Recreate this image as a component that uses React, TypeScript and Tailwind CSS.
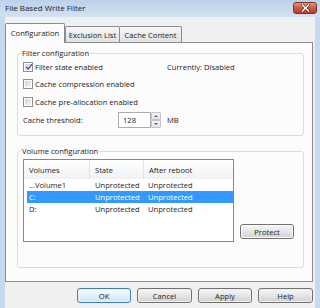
import React from "react";

function Check({ checked }: { checked?: boolean }) {
  return (
    <span className="relative w-[10px] h-[10px] border border-[#8e8f8f] bg-white p-[1px] flex shrink-0">
      <span className="flex-1 bg-gradient-to-br from-[#cdd1d6] to-[#f7f7f7]" />
      {checked && (
        <svg className="absolute left-[0px] top-[-1px]" width="10" height="10" viewBox="0 0 10 10">
          <path d="M2.2 4.8 L4.1 7.2 L7.9 2.2" fill="none" stroke="#3d55a0" strokeWidth="1.3" />
        </svg>
      )}
    </span>
  );
}

function Btn({ label, w, def }: { label: string; w: string; def?: boolean }) {
  return (
    <div
      className={
        "h-[15px] rounded-[3px] border p-[1px] flex " +
        w +
        (def ? " border-[#3c7fb1]" : " border-[#707070]")
      }
    >
      <div
        className={
          "flex-1 rounded-[2px] flex items-center justify-center " +
          (def
            ? "bg-gradient-to-b from-[#f4f9fd] via-[#e4f1fa] to-[#cde6f6]"
            : "bg-gradient-to-b from-[#f4f4f4] via-[#e6e6e6] to-[#d3d3d3]")
        }
      >
        {label}
      </div>
    </div>
  );
}

function Group({ title, children, className }: { title: string; children: React.ReactNode; className?: string }) {
  return (
    <div className={"relative border border-[#d5dfe5] rounded-[3px] " + (className ?? "")}>
      <span className="absolute left-[3px] -top-[7px] px-[1px] bg-[#fcfcfc] leading-[12px] text-[#1a1a1a]">
        {title}
      </span>
      {children}
    </div>
  );
}

const rows = [
  { v: "…Volume1", s: "Unprotected", a: "Unprotected", sel: false },
  { v: "C:", s: "Unprotected", a: "Unprotected", sel: true },
  { v: "D:", s: "Unprotected", a: "Unprotected", sel: false },
];

export default function App() {
  return (
    <div className="w-[320px] h-[308px] overflow-hidden flex flex-col bg-[#c6d9ee] text-[#1a1a1a] font-['Open_Sans','Liberation_Sans',sans-serif] text-[7.6px] leading-[12px]">
      {/* title bar */}
      <div className="h-[17px] shrink-0 flex items-start justify-between pl-[5px] pr-[3px] bg-gradient-to-b from-[#bcd1e9] to-[#d3e2f1]">
        <span className="mt-[2px] text-[8px] text-[#1a1a1a]">File Based Write Filter</span>
        <div className="mt-[2px] w-[24px] h-[12px] rounded-[3px] border border-[#7a3328] bg-gradient-to-b from-[#dd9484] via-[#cc5a45] to-[#b8402c] flex items-center justify-center">
          <svg width="9" height="8" viewBox="0 0 9 8">
            <path d="M1.5 1 L7.5 7 M7.5 1 L1.5 7" stroke="#5a1d14" strokeWidth="2.6" strokeLinecap="square" />
            <path d="M1.5 1 L7.5 7 M7.5 1 L1.5 7" stroke="#ffffff" strokeWidth="1.5" strokeLinecap="square" />
          </svg>
        </div>
      </div>

      {/* body */}
      <div className="flex-1 mx-[5px] bg-[#f0f0f0] pt-[6px] pr-[2px] flex flex-col">
        {/* tabs */}
        <div className="h-[20px] shrink-0 flex items-end -mb-[1px] relative z-10">
          <div className="w-[60px] h-[20px] border border-b-0 border-[#898c95] rounded-t-[2px] bg-[#fcfcfc] flex items-start pt-[3px] justify-center">
            Configuration
          </div>
          <div className="w-[55px] h-[16px] mb-[1px] border border-b-0 border-[#898c95] rounded-t-[2px] bg-gradient-to-b from-[#f6f6f6] to-[#e2e2e2] flex items-center justify-center">
            Exclusion List
          </div>
          <div className="w-[62px] h-[16px] mb-[1px] border border-l-0 border-b-0 border-[#898c95] rounded-tr-[2px] bg-gradient-to-b from-[#f6f6f6] to-[#e2e2e2] flex items-center justify-center">
            Cache Content
          </div>
        </div>

        {/* panel */}
        <div className="h-[240px] shrink-0 border border-[#898c95] bg-[#fcfcfc] pt-[10px] pl-[11px] pr-[8px]">
          <Group title="Filter configuration" className="pt-[8px] pb-[7px] pl-[5px]">
            <div className="h-[10px] flex items-center">
              <div className="w-[144px] flex items-center gap-[2px]">
                <Check checked />
                <span>Filter state enabled</span>
              </div>
              <span>Currently: Disabled</span>
            </div>
            <div className="h-[10px] mt-[7px] flex items-center gap-[2px]">
              <Check />
              <span>Cache compression enabled</span>
            </div>
            <div className="h-[10px] mt-[8px] flex items-center gap-[2px]">
              <Check />
              <span>Cache pre-allocation enabled</span>
            </div>
            <div className="h-[16px] mt-[5px] flex items-center">
              <span className="w-[95px]">Cache threshold:</span>
              <div className="w-[33px] h-[16px] border border-[#abadb3] bg-white flex items-center pl-[4px]">
                128
              </div>
              <div className="w-[10px] h-[16px] flex flex-col">
                <div className="h-[8px] border border-[#c3c5ca] rounded-[1px] bg-gradient-to-b from-[#f7f7f7] to-[#e4e4e4] flex items-center justify-center">
                  <svg width="4" height="2" viewBox="0 0 4 2">
                    <path d="M0 2 L2 0 L4 2 Z" fill="#4d6185" />
                  </svg>
                </div>
                <div className="h-[8px] border border-[#c3c5ca] rounded-[1px] bg-gradient-to-b from-[#f7f7f7] to-[#e4e4e4] flex items-center justify-center">
                  <svg width="4" height="2" viewBox="0 0 4 2">
                    <path d="M0 0 L2 2 L4 0 Z" fill="#4d6185" />
                  </svg>
                </div>
              </div>
              <span className="ml-[6px]">MB</span>
            </div>
          </Group>

          <Group title="Volume configuration" className="mt-[15px] pt-[7px] pb-[25px] pl-[5px]">
            <div className="flex items-end">
              <div className="w-[211px] h-[83px] border border-[#828790] bg-white flex flex-col">
                <div className="h-[19px] flex bg-gradient-to-b from-[#ffffff] to-[#f1f2f4]">
                  <div className="w-[66px] pl-[5px] flex items-center border-r border-[#e2e3e6]">Volumes</div>
                  <div className="w-[54px] pl-[5px] flex items-center border-r border-[#e2e3e6]">State</div>
                  <div className="flex-1 pl-[5px] flex items-center">After reboot</div>
                </div>
                {rows.map((r) => (
                  <div key={r.v} className="h-[12px] pl-[3px] flex">
                    <div className={"flex-1 flex items-center " + (r.sel ? "bg-[#3399ff] text-white" : "")}>
                      <div className="w-[63px] pl-[2px]">{r.v}</div>
                      <div className="w-[54px] pl-[5px]">{r.s}</div>
                      <div className="flex-1 pl-[4px]">{r.a}</div>
                    </div>
                  </div>
                ))}
              </div>
              <div className="ml-[6px] mb-[3px]">
                <Btn label="Protect" w="w-[54px]" />
              </div>
            </div>
          </Group>
        </div>

        {/* bottom buttons */}
        <div className="mt-[6px] flex justify-end gap-[6px]">
          <Btn label="OK" w="w-[54px]" def />
          <Btn label="Cancel" w="w-[55px]" />
          <Btn label="Apply" w="w-[54px]" />
          <Btn label="Help" w="w-[55px]" />
        </div>
      </div>
    </div>
  );
}
